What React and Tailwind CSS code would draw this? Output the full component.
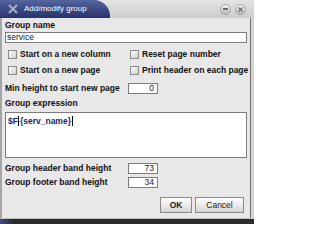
import React from 'react';

const font = { fontFamily: '"Liberation Sans", Arial, sans-serif' };

const Check = ({ label }) => (
  <div className="flex items-center gap-[2px] whitespace-nowrap">
    <span className="w-[9px] h-[9px] shrink-0 border border-[#8a8a8a] bg-gradient-to-br from-[#ffffff] to-[#cfcfcf]" />
    <span className="ml-[1px]">{label}</span>
  </div>
);

const NumRow = ({ label, value, className = "" }) => (
  <div className={`flex items-center h-[11px] whitespace-nowrap ${className}`}>
    <span className="w-[123px]">{label}</span>
    <div className="w-[30px] h-[11px] bg-white border border-[#7d7d7d] text-right pr-[3px] leading-[9px] font-normal text-[#222]">
      {value}
    </div>
  </div>
);

const RoundBtn = ({ children }) => (
  <span className="w-[11px] h-[11px] rounded-full bg-gradient-to-b from-[#f6f6f6] to-[#b9b9b9] border border-[#a4a4a4] flex items-center justify-center">
    {children}
  </span>
);

export default function App() {
  return (
    <div className="w-[254px] h-[224px] bg-[#d4d4d4] flex flex-col overflow-hidden text-[8.5px] font-bold text-[#111]" style={font}>
      {/* title bar */}
      <div className="h-[18px] flex items-stretch bg-gradient-to-b from-[#e4e4e4] to-[#cdcdcd]">
        <div className="w-[110px] rounded-tr-[16px] bg-gradient-to-b from-[#55659f] to-[#27336b] flex items-center pl-[8px] gap-[6px]">
          <svg width="10" height="10" viewBox="0 0 10 10">
            <path d="M1 1 L9 9 M9 1 L1 9" stroke="#a8b2cf" strokeWidth="1.8" />
          </svg>
          <span className="text-white font-normal text-[8px]">Add/modify group</span>
        </div>
        <div className="flex-1 flex items-center justify-end gap-[4px] pr-[8px]">
          <RoundBtn><span className="w-[5px] h-[2px] bg-[#6a6a6a]" /></RoundBtn>
          <RoundBtn>
            <svg width="5" height="5" viewBox="0 0 5 5">
              <path d="M0.5 0.5 L4.5 4.5 M4.5 0.5 L0.5 4.5" stroke="#6a6a6a" strokeWidth="1.2" />
            </svg>
          </RoundBtn>
        </div>
      </div>
      {/* body */}
      <div className="h-[200px] w-[251px] bg-[#e8e8e8] border-l-2 border-r border-l-[#a6a6a6] border-r-[#6e6e6e] flex flex-col px-[3px] pt-[1px]">
        <div className="h-[12px] leading-[12px]">Group name</div>
        <div className="mt-[1px] h-[11px] bg-white border border-[#7d7d7d] font-normal leading-[9px] pl-[1px] text-[#222]">service</div>
        <div className="mt-[3px] grid grid-cols-[122px_1fr] auto-rows-[16px] pl-[3px]">
          <Check label="Start on a new column" />
          <Check label="Reset page number" />
          <Check label="Start on a new page" />
          <Check label="Print header on each page" />
        </div>
        <NumRow className="mt-[5px]" label="Min height to start new page" value="0" />
        <div className="mt-[3px] h-[12px] leading-[12px]">Group expression</div>
        <div className="mt-[3px] h-[46px] bg-white border border-[#7d7d7d] pl-[2px] pt-[2px] text-[#1c2474] leading-[12px]">
          $F<span className="border-l border-black pl-[1px]">{'{'}</span>serv_name<span className="border-r border-black pr-[1px]">{'}'}</span>
        </div>
        <NumRow className="mt-[5px]" label="Group header band height" value="73" />
        <NumRow className="mt-[3px]" label="Group footer band height" value="34" />
        <div className="mt-[9px] flex justify-end gap-[3px] pr-[3px]">
          <button className="w-[32px] h-[16px] border border-[#8a8a8a] bg-gradient-to-b from-[#ffffff] to-[#d6d6d6] text-[#222] font-bold leading-none">OK</button>
          <button className="w-[49px] h-[16px] border border-[#8a8a8a] bg-gradient-to-b from-[#ffffff] to-[#d6d6d6] text-[#222] font-normal leading-none">Cancel</button>
        </div>
      </div>
      <div className="h-[1px] w-[251px] bg-[#bdbdbd]" />
      <div className="flex-1 flex">
        <div className="w-[14px] bg-gradient-to-r from-[#3c4b8a] to-[#2a2a2a]" />
        <div className="flex-1 bg-[#2b2b2b]" />
      </div>
    </div>
  );
}
